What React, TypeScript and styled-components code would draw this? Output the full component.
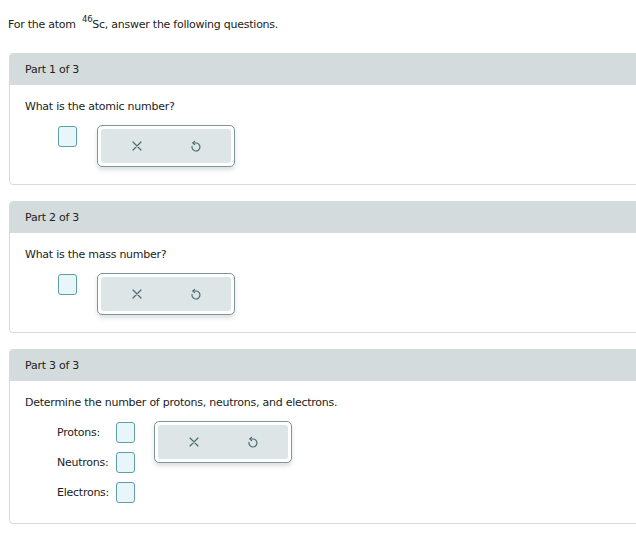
import styled, { createGlobalStyle } from "styled-components";

const GlobalStyle = createGlobalStyle`
  html, body {
    margin: 0;
    padding: 0;
    background: #ffffff;
    overflow: hidden;
  }
  body {
    font-family: "DejaVu Sans", Verdana, sans-serif;
    font-size: 11px;
    color: #222222;
    letter-spacing: -0.25px;
  }
`;

const Page = styled.div`
  width: 636px;
  height: 558px;
  overflow: hidden;
  padding-top: 17px;
  box-sizing: border-box;
`;

const Intro = styled.p`
  margin: 0 0 20px 8px;
  line-height: 16px;
`;

const Sup = styled.sup`
  font-size: 8.5px;
  vertical-align: 6px;
  line-height: 0;
  margin-left: 3px;
`;

const Card = styled.section`
  margin: 0 0 16px 9px;
  width: 660px;
  border: 1px solid #d3dbdd;
  border-radius: 4px;
  overflow: hidden;
`;

const CardHeader = styled.div`
  height: 31px;
  background: #d3dbdd;
  display: flex;
  align-items: center;
  padding-left: 15px;
`;

const CardBody = styled.div<{ $bottom: number }>`
  padding: 15px 0 ${(p) => p.$bottom}px 15px;
`;

const Question = styled.div`
  line-height: 13px;
`;

const AnswerRow = styled.div<{ $indent: number; $top: number }>`
  display: flex;
  align-items: flex-start;
  margin-top: ${(p) => p.$top}px;
  padding-left: ${(p) => p.$indent}px;
`;

const InputBox = styled.div`
  width: 19px;
  height: 21px;
  box-sizing: border-box;
  border: 1.5px solid #5d9fa9;
  border-radius: 3px;
  background: #e8f5f9;
  margin-top: 1px;
`;

const ToolGroup = styled.div<{ $left: number }>`
  margin-left: ${(p) => p.$left}px;
  width: 138px;
  height: 42px;
  box-sizing: border-box;
  border: 1.5px solid #7f969c;
  border-radius: 5px;
  background: #ffffff;
  padding: 3px;
  box-shadow: 0 3px 4px rgba(110, 130, 135, 0.25);
`;

const ToolInner = styled.div`
  height: 100%;
  border-radius: 3px;
  background: #dde5e7;
  display: flex;
  align-items: center;
  justify-content: space-around;
  padding: 0 6px;
`;

const ToolButton = styled.span`
  display: flex;
  align-items: center;
  justify-content: center;
  width: 20px;
  height: 20px;
`;

const Fields = styled.div`
  display: grid;
  grid-template-columns: 59px 19px;
  grid-auto-rows: 22px;
  row-gap: 8px;
  align-items: center;
`;

const FieldLabel = styled.span`
  line-height: 13px;
`;

const CloseIcon = () => (
  <svg width="10" height="10" viewBox="0 0 10 10">
    <path d="M1 1 L9 9 M9 1 L1 9" stroke="#4e6b73" strokeWidth="1.2" strokeLinecap="round" fill="none" />
  </svg>
);

const UndoIcon = () => (
  <svg width="11" height="12" viewBox="0 0 11 12">
    <path
      d="M3 3 L5.8 3 A4 4 0 1 1 2 6.4"
      stroke="#4e6b73"
      strokeWidth="1.2"
      fill="none"
      strokeLinecap="round"
      strokeLinejoin="round"
    />
    <path d="M4.6 1.3 L2.9 3 L4.6 4.7" stroke="#4e6b73" strokeWidth="1.2" fill="none" strokeLinecap="round" strokeLinejoin="round" />
  </svg>
);

const Tools = ({ left }: { left: number }) => (
  <ToolGroup $left={left}>
    <ToolInner>
      <ToolButton>
        <CloseIcon />
      </ToolButton>
      <ToolButton>
        <UndoIcon />
      </ToolButton>
    </ToolInner>
  </ToolGroup>
);

const SinglePart = ({ part, question }: { part: string; question: string }) => (
  <Card>
    <CardHeader>{part}</CardHeader>
    <CardBody $bottom={17}>
      <Question>{question}</Question>
      <AnswerRow $indent={33} $top={12}>
        <InputBox />
        <Tools left={20} />
      </AnswerRow>
    </CardBody>
  </Card>
);

const App = () => {
  return (
    <>
      <GlobalStyle />
      <Page>
        <Intro>
          For the atom <Sup>46</Sup>Sc, answer the following questions.
        </Intro>
        <SinglePart part="Part 1 of 3" question="What is the atomic number?" />
        <SinglePart part="Part 2 of 3" question="What is the mass number?" />
        <Card>
          <CardHeader>Part 3 of 3</CardHeader>
          <CardBody $bottom={20}>
            <Question>Determine the number of protons, neutrons, and electrons.</Question>
            <AnswerRow $indent={32} $top={12}>
              <Fields>
                <FieldLabel>Protons:</FieldLabel>
                <InputBox />
                <FieldLabel>Neutrons:</FieldLabel>
                <InputBox />
                <FieldLabel>Electrons:</FieldLabel>
                <InputBox />
              </Fields>
              <Tools left={19} />
            </AnswerRow>
          </CardBody>
        </Card>
      </Page>
    </>
  );
};

export default App;
